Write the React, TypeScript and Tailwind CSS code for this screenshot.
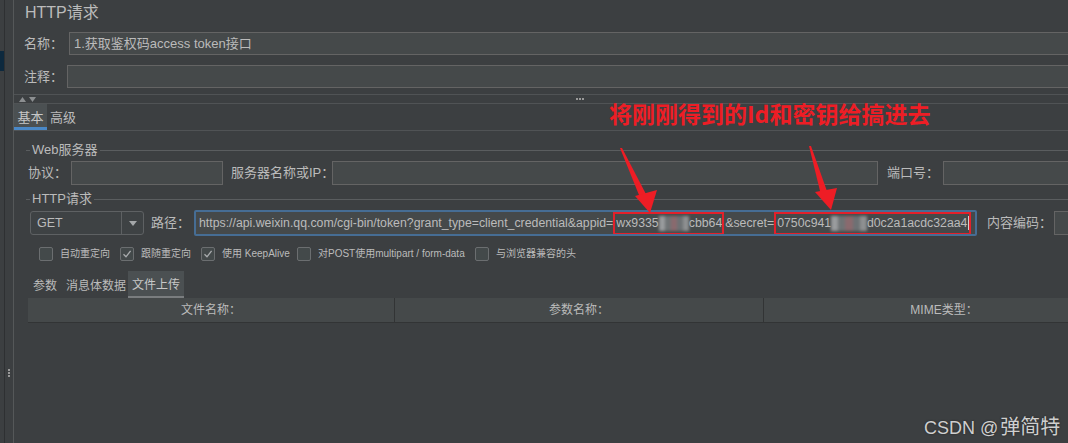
import React from "react";

const FONT = '"Liberation Sans", "Noto Sans CJK SC", sans-serif';

function GroupTitle({ title }: { title: string }) {
  return (
    <div className="flex items-center h-[16px]">
      <div className="w-[12px] flex-none" />
      <div className="w-[4px] h-px bg-[#5a5d5f] flex-none" />
      <span className="px-[2px] text-[13px] leading-[16px] text-[#bbbbbb] whitespace-nowrap">{title}</span>
      <div className="flex-1 h-px bg-[#5a5d5f]" />
    </div>
  );
}

function Checkbox({ checked, label, w }: { checked?: boolean; label: string; w: string }) {
  return (
    <div className={`flex items-center flex-none ${w}`}>
      <div className="w-[14px] h-[14px] rounded-[2px] border border-[#6b6e70] bg-[#43494a] flex items-center justify-center flex-none">
        {checked && (
          <svg width="10" height="10" viewBox="0 0 10 10">
            <path d="M1.5 5.2 L4 7.8 L8.6 1.8" stroke="#a9acae" strokeWidth="1.3" fill="none" />
          </svg>
        )}
      </div>
      <span className="ml-[7px] text-[10px] leading-[12px] text-[#bbbbbb] whitespace-nowrap">{label}</span>
    </div>
  );
}

function Blur({ w }: { w: number }) {
  return (
    <span className="inline-flex h-[15px] align-middle blur-[1.5px]" style={{ width: w }}>
      <span className="flex-1 bg-[#9a9c9e]" />
      <span className="flex-1 bg-[#6f7375]" />
      <span className="flex-1 bg-[#8a6a6e]" />
      <span className="flex-1 bg-[#6d7174]" />
      <span className="flex-1 bg-[#8e9091]" />
    </span>
  );
}

export default function App() {
  return (
    <div className="relative flex w-[1068px] h-[443px] overflow-hidden bg-[#3c3f41]" style={{ fontFamily: FONT }}>
      {/* left strip */}
      <div className="flex flex-none w-[14px] border-r border-[#555859]">
        <div className="w-[4px] flex-none">
          <div className="mt-[51px] h-[20px] bg-[#0d293e]" />
        </div>
        <div className="w-px bg-[#2e3032] flex-none" />
        <div className="flex-1 flex flex-col items-center pt-[369px] gap-[1px]">
          <div className="w-[2px] h-[2px] bg-[#999]" />
          <div className="w-[2px] h-[2px] bg-[#999]" />
          <div className="w-[2px] h-[2px] bg-[#999]" />
        </div>
      </div>

      {/* main */}
      <div className="flex flex-col w-[1140px] flex-none text-[#bbbbbb]">
        <div className="h-[32px] pl-[11px] pt-[4px] text-[16px] leading-[18px] text-[#bbbbbb]">HTTP请求</div>

        <div className="flex h-[23px] items-center">
          <span className="ml-[10px] w-[45px] text-[13px] whitespace-nowrap">名称：</span>
          <div className="flex-1 h-full bg-[#45494a] border border-[#646464] flex items-center pl-[4px] text-[13px] text-[#bbbbbb]">
            1.获取鉴权码access token接口
          </div>
        </div>

        <div className="flex h-[23px] items-center mt-[10px]">
          <span className="ml-[10px] w-[43px] text-[13px] whitespace-nowrap">注释：</span>
          <div className="flex-1 h-full bg-[#45494a] border border-[#646464]" />
        </div>

        {/* splitter */}
        <div className="mt-[6px] h-[10px] border-y border-[#505355] flex items-center">
          <div className="ml-[5px] flex items-center gap-[3px]">
            <svg width="7" height="5" viewBox="0 0 7 5"><path d="M0 5 L3.5 0 L7 5Z" fill="#8c8f91" /></svg>
            <svg width="7" height="5" viewBox="0 0 7 5"><path d="M0 0 L3.5 5 L7 0Z" fill="#8c8f91" /></svg>
          </div>
          <div className="ml-[540px] flex gap-[1px]">
            <div className="w-[2px] h-[2px] bg-[#999]" />
            <div className="w-[2px] h-[2px] bg-[#999]" />
            <div className="w-[2px] h-[2px] bg-[#999]" />
          </div>
        </div>

        {/* tabs */}
        <div className="flex h-[27px] border-b border-[#505355] items-stretch">
          <div className="w-[33px] bg-[#4b5052] border-b-[3px] border-[#4a88c7] flex items-center justify-center pt-[4px] text-[13px] text-[#c8c8c8]">基本</div>
          <div className="ml-[3px] w-[28px] flex items-center pt-[4px] pb-[3px] text-[13px]">高级</div>
        </div>

        <div className="mt-[11px]">
          <GroupTitle title="Web服务器" />
        </div>

        <div className="flex items-center h-[24px] mt-[3px]">
          <span className="ml-[14px] w-[43px] text-[13px] whitespace-nowrap">协议：</span>
          <div className="w-[152px] h-full bg-[#45494a] border border-[#646464]" />
          <span className="ml-[8px] w-[101px] text-[13px] whitespace-nowrap">服务器名称或IP：</span>
          <div className="w-[546px] h-full bg-[#45494a] border border-[#646464]" />
          <span className="ml-[9px] w-[56px] text-[13px] whitespace-nowrap">端口号：</span>
          <div className="w-[140px] h-full bg-[#45494a] border border-[#646464]" />
        </div>

        <div className="mt-[6px]">
          <GroupTitle title="HTTP请求" />
        </div>

        <div className="flex items-center h-[26px] mt-[3px]">
          <div className="ml-[16px] w-[114px] h-[24px] rounded-[3px] border border-[#5e6163] bg-[#3e4244] flex">
            <div className="flex-1 flex items-center pl-[6px] text-[12.5px] text-[#bbbbbb]">GET</div>
            <div className="w-[22px] border-l border-[#5e6163] flex items-center justify-center">
              <svg width="8" height="5" viewBox="0 0 8 5"><path d="M0 0 L4 5 L8 0Z" fill="#a4a7a9" /></svg>
            </div>
          </div>
          <span className="ml-[7px] w-[43px] text-[13px] whitespace-nowrap">路径：</span>
          <div className="w-[783px] h-[26px] border-2 border-[#466d94] rounded-[2px] bg-[#45494a] flex items-center pl-[3px] text-[12.3px] text-[#bbbbbb] whitespace-nowrap overflow-hidden">
            <span>https://api.weixin.qq.com/cgi-bin/token?grant_type=client_credential&amp;appid=</span>
            <span className="h-[23px] w-[111px] flex-none border-2 border-[#e3202a] flex items-center overflow-hidden pl-[1px]">
              <span>wx9335</span>
              <Blur w={36} />
              <span>cbb64</span>
            </span>
            <span className="ml-[1px]">&amp;secret=</span>
            <span className="h-[23px] w-[197px] flex-none border-2 border-[#e3202a] flex items-center overflow-hidden pl-[1px]">
              <span>0750c941</span>
              <Blur w={52} />
              <span>d0c2a1acdc32aa4</span>
              <span className="w-px h-[14px] bg-[#cfcfcf] ml-[1px]" />
            </span>
          </div>
          <span className="ml-[10px] w-[67px] text-[13px] whitespace-nowrap">内容编码：</span>
          <div className="w-[80px] h-[24px] bg-[#45494a] border border-[#646464]" />
        </div>

        {/* checkboxes */}
        <div className="flex items-center h-[14px] mt-[11px] ml-[25px]">
          <Checkbox label="自动重定向" w="w-[81px]" />
          <Checkbox checked label="跟随重定向" w="w-[81px]" />
          <Checkbox checked label="使用 KeepAlive" w="w-[96px]" />
          <Checkbox label="对POST使用multipart / form-data" w="w-[178px]" />
          <Checkbox label="与浏览器兼容的头" w="w-[120px]" />
        </div>

        {/* sub tabs */}
        <div className="flex h-[27px] mt-[10px] ml-[14px] items-stretch">
          <div className="w-[34px] flex items-center justify-center pt-[2px] text-[12px] whitespace-nowrap">参数</div>
          <div className="ml-[2px] w-[64px] flex items-center justify-center pt-[2px] text-[12px] whitespace-nowrap">消息体数据</div>
          <div className="w-[56px] bg-[#4b5052] border-b-[2px] border-[#7a7d7f] flex items-center justify-center pt-[2px] text-[12px] text-[#c8c8c8] whitespace-nowrap">文件上传</div>
        </div>

        {/* table header */}
        <div className="flex h-[25px] ml-[14px] bg-[#45494a] border-b border-[#323435] text-[12px]">
          <div className="w-[367px] border-r border-[#323435] flex items-center justify-center whitespace-nowrap">文件名称：</div>
          <div className="w-[369px] border-r border-[#323435] flex items-center justify-center whitespace-nowrap">参数名称：</div>
          <div className="w-[360px] flex items-center justify-center whitespace-nowrap">MIME类型：</div>
        </div>
      </div>

      {/* annotation */}
      <div className="absolute left-[609px] top-[99px] text-[23px] font-bold text-[#ee1d25] whitespace-nowrap leading-[28px]" style={{ fontFamily: '"Noto Sans CJK SC", sans-serif' }}>
        将刚刚得到的Id和密钥给搞进去
      </div>
      <svg className="absolute left-0 top-0 pointer-events-none" width="1068" height="443">
        <polygon points="620,148 622,148 648,198 641,200" fill="#ee1d25" />
        <polygon points="635,196 657,190 650,213" fill="#ee1d25" />
        <polygon points="809,146 811,146 828,194 821,195" fill="#ee1d25" />
        <polygon points="815,192 837,188 831,210" fill="#ee1d25" />
      </svg>

      {/* watermark */}
      <div className="absolute left-[924px] top-[411px] flex items-baseline whitespace-nowrap text-[#cfcfcf]" style={{ textShadow: "0 0 2px #222" }}>
        <span className="text-[18px]" style={{ fontFamily: '"Liberation Sans", sans-serif' }}>CSDN @</span>
        <span className="text-[20px] ml-[2px]" style={{ fontFamily: '"Noto Sans CJK SC", sans-serif' }}>弹简特</span>
      </div>
    </div>
  );
}
